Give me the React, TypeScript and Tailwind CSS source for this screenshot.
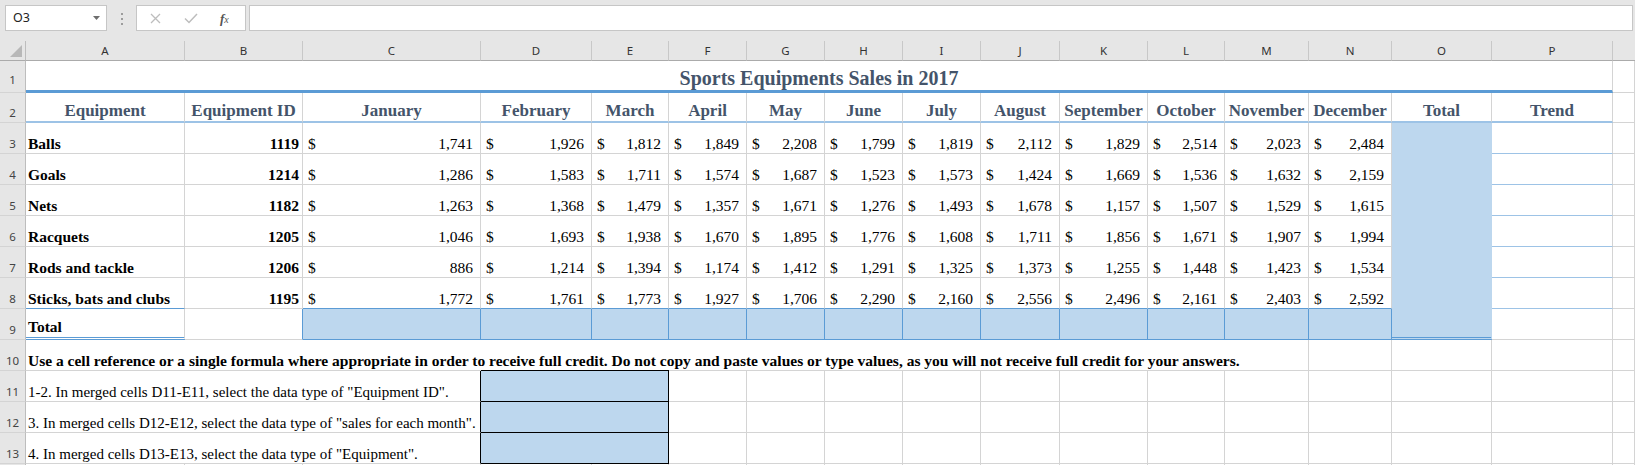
import React from 'react';

const MONTHS = ['January','February','March','April','May','June','July','August','September','October','November','December'];
const COL_LETTERS = ['A','B','C','D','E','F','G','H','I','J','K','L','M','N','O','P'];

const DATA: [string, number, number[]][] = [
  ['Balls', 1119, [1741,1926,1812,1849,2208,1799,1819,2112,1829,2514,2023,2484]],
  ['Goals', 1214, [1286,1583,1711,1574,1687,1523,1573,1424,1669,1536,1632,2159]],
  ['Nets', 1182, [1263,1368,1479,1357,1671,1276,1493,1678,1157,1507,1529,1615]],
  ['Racquets', 1205, [1046,1693,1938,1670,1895,1776,1608,1711,1856,1671,1907,1994]],
  ['Rods and tackle', 1206, [886,1214,1394,1174,1412,1291,1325,1373,1255,1448,1423,1534]],
  ['Sticks, bats and clubs', 1195, [1772,1761,1773,1927,1706,2290,2160,2556,2496,2161,2403,2592]],
];

const fmt = (n: number) => n.toLocaleString('en-US');

function RowHeader({ n, pb = 'pb-[4px]' }: { n: number | string; pb?: string }) {
  return (
    <div className={`bg-[#e6e6e6] border-r border-b border-r-[#bdbdbd] border-b-[#d4d4d4] flex items-end justify-center ${pb} text-[11.5px] leading-none text-[#444] font-['Noto_Sans',sans-serif]`}>
      {n}
    </div>
  );
}

function Gray({ extra = '' }: { extra?: string }) {
  return <div className={`border-r border-b border-[#d4d4d4] ${extra}`} />;
}

function Toolbar() {
  return (
    <div className="h-[41px] bg-[#e6e6e6] flex items-start font-['Noto_Sans',sans-serif]">
      <div className="ml-[5px] mt-[5px] w-[102px] h-[26px] bg-white border border-[#c6c6c6] flex items-center pl-[7px] pr-[6px] text-[12.5px] text-[#222]">
        <span className="flex-1">O3</span>
        <svg width="7" height="4" viewBox="0 0 7 4"><path d="M0 0 L7 0 L3.5 4 Z" fill="#6e6e6e" /></svg>
      </div>
      <div className="ml-[14px] mt-[13px] flex flex-col gap-[3px]">
        <div className="w-[2px] h-[2px] bg-[#9c9c9c]" />
        <div className="w-[2px] h-[2px] bg-[#9c9c9c]" />
        <div className="w-[2px] h-[2px] bg-[#9c9c9c]" />
      </div>
      <div className="ml-[13px] mt-[5px] w-[110px] h-[26px] bg-white border border-[#c6c6c6] flex items-center">
        <svg className="ml-[13px]" width="11" height="11" viewBox="0 0 11 11">
          <path d="M1 1 L10 10 M10 1 L1 10" stroke="#bdbdbd" strokeWidth="1.3" />
        </svg>
        <svg className="ml-[23px]" width="14" height="11" viewBox="0 0 14 11">
          <path d="M1 5.5 L5 9.5 L13 1" stroke="#bdbdbd" strokeWidth="1.5" fill="none" />
        </svg>
        <span className="ml-[22px] text-[13px] italic text-[#555] font-['Liberation_Serif',serif] leading-none">
          <span className="font-bold">f</span><span className="text-[10px]">x</span>
        </span>
      </div>
      <div className="ml-[3px] mt-[5px] flex-1 mr-[2px] h-[26px] bg-white border border-[#c6c6c6]" />
    </div>
  );
}

function Sheet() {
  const cells: React.ReactNode[] = [];

  // Column header row
  cells.push(
    <div key="corner" className="bg-[#e6e6e6] border-r border-b border-r-[#bdbdbd] border-b-[#ababab] flex items-start">
      <svg className="mt-[4px] ml-[10px]" width="13" height="13" viewBox="0 0 13 13">
        <path d="M12 0 L12 12 L0 12 Z" fill="#b8b8b8" />
      </svg>
    </div>
  );
  COL_LETTERS.forEach((l) => {
    cells.push(
      <div key={`ch-${l}`} className="bg-[#e6e6e6] border-r border-b border-r-[#c8c8c8] border-b-[#ababab] flex items-center justify-center text-[11.5px] text-[#333] font-['Noto_Sans',sans-serif]">
        {l}
      </div>
    );
  });
  cells.push(<div key="ch-q" className="bg-[#e6e6e6] border-b border-b-[#ababab]" />);

  // Row 1
  cells.push(<RowHeader key="rh1" n={1} pb="pb-[7px]" />);
  cells.push(
    <div key="title" className="col-span-16 border-r border-r-[#d4d4d4] border-b-[3px] border-b-[#5b9bd5] flex items-end justify-center pb-[1px] text-[20px] leading-[22px] font-bold text-[#44546a]">
      Sports Equipments Sales in 2017
    </div>
  );
  cells.push(<Gray key="q1" />);

  // Row 2
  cells.push(<RowHeader key="rh2" n={2} />);
  const headers = ['Equipment', 'Equipment ID', ...MONTHS, 'Total', 'Trend'];
  headers.forEach((h) => {
    cells.push(
      <div key={`h-${h}`} className="border-r border-r-[#d4d4d4] border-b-2 border-b-[#9dc3e6] flex items-end justify-center text-[17px] leading-[20px] font-bold text-[#44546a] whitespace-nowrap">
        {h}
      </div>
    );
  });
  cells.push(<Gray key="q2" />);

  // Rows 3-8
  DATA.forEach(([name, id, vals], i) => {
    const last = i === DATA.length - 1;
    cells.push(<RowHeader key={`rh${i + 3}`} n={i + 3} />);
    cells.push(
      <div key={`a${i}`} className={`border-r border-b border-r-[#d4d4d4] ${last ? 'border-b-[#5b9bd5]' : 'border-b-[#d4d4d4]'} flex items-end pl-[2px] text-[15.5px] leading-[18px] font-bold text-black whitespace-nowrap`}>
        {name}
      </div>
    );
    cells.push(
      <div key={`b${i}`} className="border-r border-b border-[#d4d4d4] flex items-end justify-end pr-[3px] text-[15.5px] leading-[18px] font-bold text-black">
        {id}
      </div>
    );
    vals.forEach((v, j) => {
      cells.push(
        <div key={`v${i}-${j}`} className={`border-r border-b border-r-[#d4d4d4] ${last ? 'border-b-[#5b9bd5]' : 'border-b-[#d4d4d4]'} flex items-end justify-between pl-[5px] pr-[7px] text-[15.5px] leading-[18px] text-black`}>
          <span>$</span>
          <span>{fmt(v)}</span>
        </div>
      );
    });
    cells.push(<div key={`o${i}`} className="bg-[#bdd7ee] border-r border-b border-[#bdd7ee]" />);
    cells.push(<div key={`p${i}`} className="border-r border-b border-r-[#d4d4d4] border-b-[#9dc3e6]" />);
    cells.push(<Gray key={`q${i}`} />);
  });

  // Row 9
  cells.push(<RowHeader key="rh9" n={9} />);
  cells.push(
    <div key="a9" className="border-r border-r-[#d4d4d4] border-b-[3px] border-double border-b-[#5b9bd5] flex items-end pl-[2px] pb-[1px] text-[15.5px] leading-[18px] font-bold text-black">
      Total
    </div>
  );
  cells.push(<div key="b9" className="border-r border-b border-r-[#5b9bd5] border-b-[#d4d4d4]" />);
  for (let j = 0; j < 12; j++) {
    cells.push(<div key={`t9-${j}`} className="bg-[#bdd7ee] border-r border-b border-[#5b9bd5]" />);
  }
  cells.push(<div key="o9" className="bg-[#bdd7ee] border-r border-r-[#bdd7ee] border-b-[3px] border-double border-b-[#5b9bd5]" />);
  cells.push(<Gray key="p9" />);
  cells.push(<Gray key="q9" />);

  // Row 10
  cells.push(<RowHeader key="rh10" n={10} />);
  cells.push(
    <div key="a10" className="col-span-13 border-r border-b border-[#d4d4d4] flex items-end pl-[2px] text-[15.5px] leading-[18px] font-bold text-black whitespace-nowrap">
      Use a cell reference or a single formula where appropriate in order to receive full credit. Do not copy and paste values or type values, as you will not receive full credit for your answers.
    </div>
  );
  for (let j = 0; j < 4; j++) cells.push(<Gray key={`r10-${j}`} />);

  // Rows 11-13
  const qs = [
    '1-2. In merged cells D11-E11, select the data type of "Equipment ID".',
    '3. In merged cells D12-E12, select the data type of "sales for each month".',
    '4. In merged cells D13-E13, select the data type of "Equipment".',
  ];
  qs.forEach((q, i) => {
    cells.push(<RowHeader key={`rhq${i}`} n={11 + i} />);
    cells.push(
      <div key={`qa${i}`} className="col-span-3 border-r border-b border-r-black border-b-[#d4d4d4] flex items-end pl-[2px] text-[15px] leading-[18px] text-black whitespace-nowrap">
        {q}
      </div>
    );
    cells.push(
      <div key={`qd${i}`} className={`col-span-2 bg-[#bdd7ee] border-r border-b border-black ${i === 0 ? 'shadow-[0_-1px_0_#000]' : ''}`} />
    );
    for (let j = 0; j < 12; j++) cells.push(<Gray key={`qr${i}-${j}`} />);
  });

  // Row 14 (sliver)
  cells.push(<div key="rh14" className="bg-[#e6e6e6] border-r border-r-[#bdbdbd]" />);
  for (let j = 0; j < 17; j++) cells.push(<div key={`r14-${j}`} className="border-r border-[#d4d4d4]" />);

  return (
    <div className="grid grid-cols-[26px_159px_118px_178px_111px_77px_78px_78px_78px_78px_79px_88px_77px_84px_83px_100px_121px_1fr] grid-rows-[20px_32px_30px_repeat(11,31px)_1fr] h-[424px] font-['Liberation_Serif',serif]">
      {cells}
    </div>
  );
}

export default function App() {
  return (
    <div className="w-[1635px] h-[465px] overflow-hidden bg-white">
      <Toolbar />
      <Sheet />
    </div>
  );
}
